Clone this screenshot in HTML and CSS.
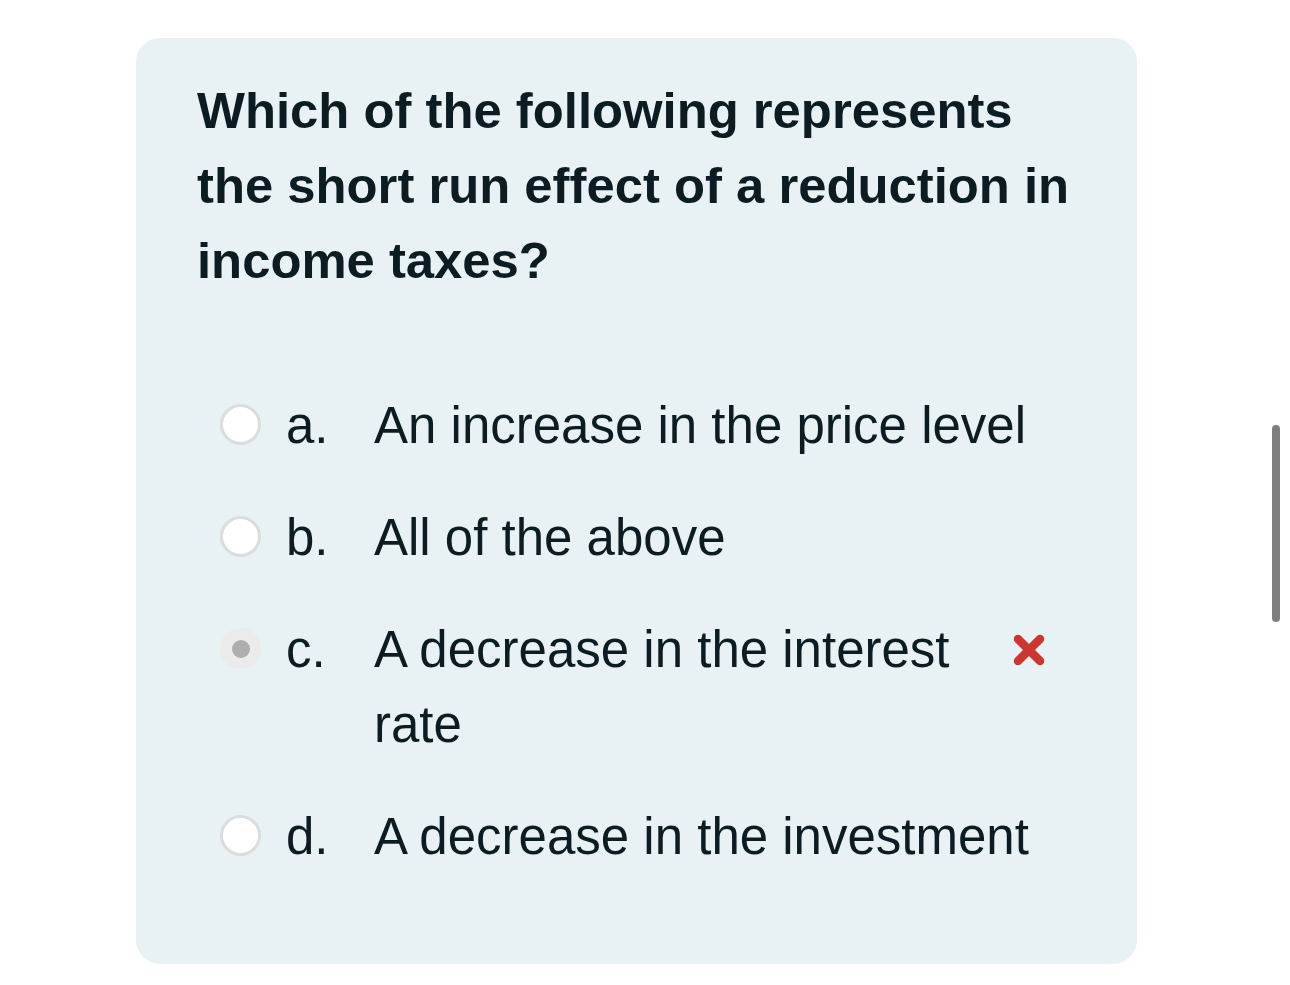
FILE: index.html
```html
<!DOCTYPE html>
<html>
<head>
<meta charset="utf-8">
<link rel="stylesheet" href="styles.css">
</head>
<body>
<div class="page">
  <div class="card">
    <div class="question">Which of the following represents the short run effect of a reduction in income taxes?</div>
    <div class="options">
      <div class="option">
        <span class="radio"></span>
        <span class="letter">a.</span>
        <span class="text">An increase in the price level</span>
      </div>
      <div class="option">
        <span class="radio"></span>
        <span class="letter">b.</span>
        <span class="text">All of the above</span>
      </div>
      <div class="option">
        <span class="radio selected"><span class="dot"></span></span>
        <span class="letter">c.</span>
        <span class="text narrow">A decrease in the interest rate</span>
        <span class="mark">
          <svg width="32" height="32" viewBox="0 0 32 32"><path d="M5 5 L27 27 M27 5 L5 27" stroke="#cc3631" stroke-width="8.5" stroke-linecap="round"/></svg>
        </span>
      </div>
      <div class="option">
        <span class="radio"></span>
        <span class="letter">d.</span>
        <span class="text">A decrease in the investment</span>
      </div>
    </div>
  </div>
  <div class="scrollbar"></div>
</div>
</body>
</html>
```
FILE: styles.css
```css
html, body {
  margin: 0;
  padding: 0;
  background: #ffffff;
}
body {
  font-family: "Liberation Sans", Arial, sans-serif;
  color: #0b1d22;
}
.page {
  width: 1290px;
  height: 985px;
  padding-top: 38px;
  padding-left: 136px;
  box-sizing: border-box;
}
.card {
  width: 1001px;
  box-sizing: border-box;
  background: #e8f2f5;
  border-radius: 24px;
  padding: 35px 60px 90px 61px;
}
.question {
  font-size: 50.8px;
  font-weight: bold;
  line-height: 75px;
}
.options {
  margin-top: 90px;
  display: flex;
  flex-direction: column;
  gap: 37px;
}
.option {
  display: flex;
  align-items: flex-start;
  font-size: 51px;
  line-height: 75px;
  padding-left: 23px;
}
.radio {
  flex: none;
  width: 35px;
  height: 35px;
  margin-top: 16px;
  border: 3.5px solid #dadcdd;
  border-radius: 50%;
  background: #ffffff;
  display: flex;
  align-items: center;
  justify-content: center;
}
.radio.selected {
  background: #ebebeb;
  border-color: #ebebeb;
}
.dot {
  width: 18px;
  height: 18px;
  border-radius: 50%;
  background: #aeaeae;
}
.letter {
  flex: none;
  width: 88px;
  margin-left: 25px;
}
.text {
  flex: 1;
}
.text.narrow {
  flex: 0 0 600px;
}
.mark {
  flex: none;
  height: 75px;
  display: flex;
  align-items: center;
  margin-left: 39px;
}
.scrollbar {
  position: absolute;
  left: 1272px;
  top: 425px;
  width: 8px;
  height: 197px;
  border-radius: 4px;
  background: #7f7f7f;
}
```
